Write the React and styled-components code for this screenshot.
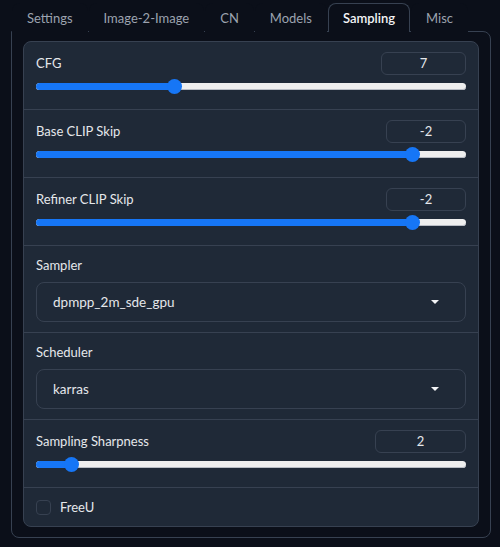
import React from 'react';
import styled, { createGlobalStyle } from 'styled-components';

const GlobalStyle = createGlobalStyle`
  body {
    margin: 0;
    background: #0b0f19;
    font-family: "Lato", "Noto Sans", sans-serif;
    color: #e5e7eb;
  }
`;

const Page = styled.div`
  padding: 0 9px 9px 11px;
`;

const TabBar = styled.div`
  display: flex;
  gap: 1px;
  padding: 3px 0 0 1px;
  height: 28px;
  position: relative;
  z-index: 1;
`;

const Tab = styled.div`
  flex-shrink: 0;
  white-space: nowrap;
  padding: 0 14px;
  font-size: 13px;
  line-height: 28px;
  color: ${props => props.active ? '#f3f4f6' : '#9ca3af'};
  font-weight: ${props => props.active ? 600 : 400};
  border: 1px solid ${props => props.active ? '#374151' : 'transparent'};
  border-bottom: none;
  border-radius: 8px 8px 0 0;
  background: #0b0f19;
  height: 29px;
  box-sizing: border-box;
`;

const Panel = styled.div`
  border: 1px solid #374151;
  border-radius: 0 8px 8px 8px;
  padding: 9px 11px 10px 11px;
`;

const Block = styled.div`
  background: #1f2937;
  border: 1px solid #374151;
  border-radius: 8px;
  overflow: hidden;
`;

const Row = styled.div`
  padding: 10px 12px;
  & + & {
    border-top: 1px solid #374151;
  }
`;

const Header = styled.div`
  display: flex;
  align-items: center;
  justify-content: space-between;
  height: 23px;
`;

const Label = styled.div`
  font-size: 13px;
  line-height: 18px;
  color: #e5e7eb;
  margin-top: -2px;
`;

const FieldLabel = styled(Label)`
  margin: 0 0 8px;
`;

const NumberBox = styled.div`
  width: ${props => props.w}px;
  height: 23px;
  box-sizing: border-box;
  border: 1px solid #374151;
  border-radius: 6px;
  font-size: 13px;
  line-height: 21px;
  text-align: center;
  color: #e5e7eb;
`;

const SliderArea = styled.div`
  position: relative;
  height: 24px;
`;

const Track = styled.div`
  position: absolute;
  left: 0;
  right: 0;
  top: 8px;
  height: 7px;
  border-radius: 4px;
  background: #eeeeee;
  box-shadow: inset 0 -1px 0 #b8bcc4;
`;

const Fill = styled.div`
  position: absolute;
  left: 0;
  top: 8px;
  height: 7px;
  border-radius: 4px;
  background: #1676f6;
`;

const Thumb = styled.div`
  position: absolute;
  top: 4px;
  width: 15px;
  height: 15px;
  margin-left: -7.5px;
  border-radius: 50%;
  background: #1676f6;
`;

const Select = styled.div`
  display: flex;
  align-items: center;
  justify-content: space-between;
  height: 40px;
  box-sizing: border-box;
  border: 1px solid #374151;
  border-radius: 8px;
  padding: 0 26px 0 16px;
  font-size: 13.5px;
  color: #e5e7eb;
`;

const Caret = styled.span`
  width: 0;
  height: 0;
  border-left: 4.5px solid transparent;
  border-right: 4.5px solid transparent;
  border-top: 4.5px solid #f3f4f6;
`;

const CheckRow = styled.label`
  display: flex;
  align-items: center;
  gap: 9px;
  height: 18px;
  font-size: 13px;
`;

const Box = styled.span`
  width: 15px;
  height: 15px;
  box-sizing: border-box;
  border: 1px solid #374151;
  border-radius: 4px;
  background: #1f2937;
`;

const Slider = ({ label, value, min, max, w }) => {
  const pct = (value - min) / (max - min);
  const pos = `calc(7.5px + (100% - 15px) * ${pct})`;
  return (
    <Row>
      <Header>
        <Label>{label}</Label>
        <NumberBox w={w}>{value}</NumberBox>
      </Header>
      <SliderArea>
        <Track />
        <Fill style={{ width: pos }} />
        <Thumb style={{ left: pos }} />
      </SliderArea>
    </Row>
  );
};

const Dropdown = ({ label, value }) => (
  <Row>
    <FieldLabel>{label}</FieldLabel>
    <Select>
      <span>{value}</span>
      <Caret />
    </Select>
  </Row>
);

const tabs = ['Settings', 'Image-2-Image', 'CN', 'Models', 'Sampling', 'Misc'];

export default function App() {
  return (
    <>
      <GlobalStyle />
      <Page>
        <TabBar>
          {tabs.map(t => (
            <Tab key={t} active={t === 'Sampling'}>{t}</Tab>
          ))}
        </TabBar>
        <Panel>
          <Block>
            <Slider label="CFG" value={7} min={1} max={20} w={85} />
            <Slider label="Base CLIP Skip" value={-2} min={-10} max={-1} w={80} />
            <Slider label="Refiner CLIP Skip" value={-2} min={-10} max={-1} w={80} />
            <Dropdown label="Sampler" value="dpmpp_2m_sde_gpu" />
            <Dropdown label="Scheduler" value="karras" />
            <Slider label="Sampling Sharpness" value={2} min={0} max={30} w={91} />
            <Row>
              <CheckRow>
                <Box />
                FreeU
              </CheckRow>
            </Row>
          </Block>
        </Panel>
      </Page>
    </>
  );
}
